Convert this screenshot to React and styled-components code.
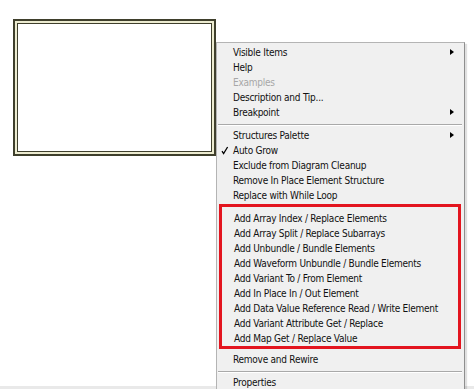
import React from "react";
import styled, { createGlobalStyle } from "styled-components";

const Global = createGlobalStyle`
  html, body { margin: 0; padding: 0; background: #ffffff; overflow: hidden; }
  body { width: 474px; height: 389px; }
  #root { width: 474px; height: 389px; }
`;

const Page = styled.div`
  position: relative;
  width: 474px;
  height: 389px;
  display: flex;
  flex-direction: column;
`;

const Canvas = styled.div`
  flex: 1;
  padding: 19px 0 0 13px;
`;

const Strip = styled.div`
  height: 3px;
  background: #e9e9e9;
`;

const Frame = styled.div`
  box-sizing: border-box;
  width: 203px;
  height: 137px;
  border: 2px solid #3f3f2c;
  background: #ecebd0;
  padding: 2px;
`;

const FrameInner = styled.div`
  box-sizing: border-box;
  height: 100%;
  border: 1px solid #3f3f2c;
  background: #ffffff;
`;

const Menu = styled.div`
  position: absolute;
  left: 216px;
  top: 42px;
  width: 249px;
  box-sizing: border-box;
  background: #f0f0f0;
  border: 1px solid #b4b4b4;
  border-right-color: #8e8e8e;
  box-shadow: 2px 2px 1px rgba(0, 0, 0, 0.12);
  padding: 2px 0 0 0;
  font-family: "DejaVu Sans Condensed", "DejaVu Sans", sans-serif;
  font-size: 10px;
  letter-spacing: -0.25px;
  color: #111;
  z-index: 2;
`;

const Row = styled.div`
  position: relative;
  height: 15px;
  line-height: 15px;
  padding-left: ${(p) => (p.$inset ? 12 : 16)}px;
  white-space: nowrap;
  color: ${(p) => (p.$disabled ? "#a7a7a7" : "#111")};
`;

const Arrow = styled.span`
  position: absolute;
  right: 10px;
  top: 4px;
  width: 0;
  height: 0;
  border-top: 3.5px solid transparent;
  border-bottom: 3.5px solid transparent;
  border-left: 4px solid #000;
`;

const Check = styled.svg`
  position: absolute;
  left: 4px;
  top: 3px;
`;

const Separator = styled.div`
  height: 8px;
  display: flex;
  align-items: center;
  padding: 0 2px 0 1px;
  &::before {
    content: "";
    flex: 1;
    height: 1px;
    background: #a9a9a9;
    box-shadow: 0 1px 0 #ffffff;
  }
`;

const Highlight = styled.div`
  margin: 1px 3px 3px 2px;
  border: 3px solid #e3151f;
  padding: 4px 0 0 0;
`;

const groupA = [
  { t: "Visible Items", sub: true },
  { t: "Help" },
  { t: "Examples", disabled: true },
  { t: "Description and Tip..." },
  { t: "Breakpoint", sub: true },
];

const groupB = [
  { t: "Structures Palette", sub: true },
  { t: "Auto Grow", check: true },
  { t: "Exclude from Diagram Cleanup" },
  { t: "Remove In Place Element Structure" },
  { t: "Replace with While Loop" },
];

const groupC = [
  "Add Array Index / Replace Elements",
  "Add Array Split / Replace Subarrays",
  "Add Unbundle / Bundle Elements",
  "Add Waveform Unbundle / Bundle Elements",
  "Add Variant To / From Element",
  "Add In Place In / Out Element",
  "Add Data Value Reference Read / Write Element",
  "Add Variant Attribute Get / Replace",
  "Add Map Get / Replace Value",
];

function Item({ item }) {
  return (
    <Row $disabled={item.disabled}>
      {item.check && (
        <Check width="8" height="9" viewBox="0 0 8 9">
          <path d="M1 5.2 L2.6 7.6 L6.6 1" fill="none" stroke="#000" strokeWidth="1.3" />
        </Check>
      )}
      {item.t}
      {item.sub && <Arrow />}
    </Row>
  );
}

export default function App() {
  return (
    <>
      <Global />
      <Page>
        <Canvas>
          <Frame>
            <FrameInner />
          </Frame>
        </Canvas>
        <Strip />
        <Menu>
          {groupA.map((it) => (
            <Item key={it.t} item={it} />
          ))}
          <Separator />
          {groupB.map((it) => (
            <Item key={it.t} item={it} />
          ))}
          <Highlight>
            {groupC.map((t) => (
              <Row key={t} $inset>
                {t}
              </Row>
            ))}
          </Highlight>
          <Row>Remove and Rewire</Row>
          <Separator />
          <Row>Properties</Row>
        </Menu>
      </Page>
    </>
  );
}
